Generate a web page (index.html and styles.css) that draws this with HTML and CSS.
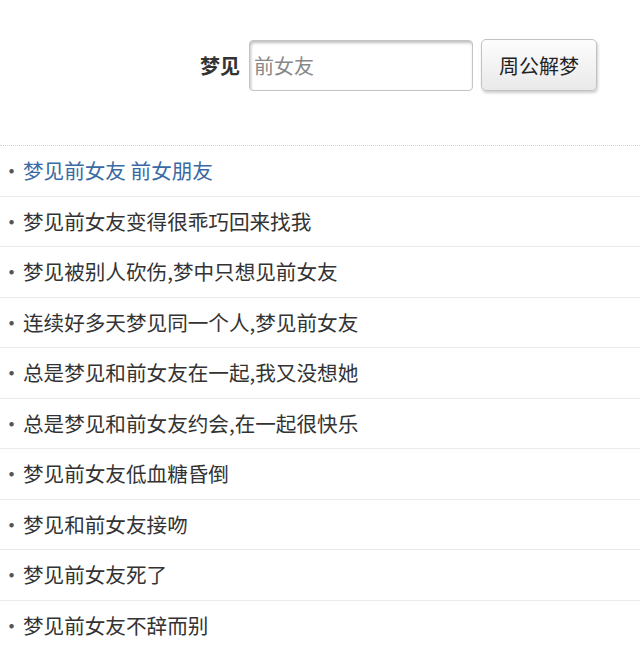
FILE: index.html
```html
<!DOCTYPE html>
<html lang="zh-CN">
<head>
<meta charset="UTF-8">
<title>周公解梦 - 梦见前女友</title>
<link rel="stylesheet" href="styles.css">
</head>
<body>

<!-- Search -->
<form class="search">
  <label class="search-label" for="q">梦见</label>
  <input id="q" class="search-input" type="text" placeholder="前女友">
  <button class="search-btn" type="button">周公解梦</button>
</form>

<!-- Results -->
<ul class="list">
  <li class="item current"><a href="#">梦见前女友 前女朋友</a></li>
  <li class="item"><a href="#">梦见前女友变得很乖巧回来找我</a></li>
  <li class="item"><a href="#">梦见被别人砍伤,梦中只想见前女友</a></li>
  <li class="item"><a href="#">连续好多天梦见同一个人,梦见前女友</a></li>
  <li class="item"><a href="#">总是梦见和前女友在一起,我又没想她</a></li>
  <li class="item"><a href="#">总是梦见和前女友约会,在一起很快乐</a></li>
  <li class="item"><a href="#">梦见前女友低血糖昏倒</a></li>
  <li class="item"><a href="#">梦见和前女友接吻</a></li>
  <li class="item"><a href="#">梦见前女友死了</a></li>
  <li class="item"><a href="#">梦见前女友不辞而别</a></li>
</ul>

</body>
</html>
```

FILE: styles.css
```css
body{margin:0;background:#fff;font-family:"Noto Sans CJK SC","Noto Sans",sans-serif;color:#333}
/* Search */
.search{display:flex;align-items:center;padding:39px 0 0 200px;height:52px;margin:0 0 54px}
.search-label{font-size:20px;font-weight:700;color:#333;margin-right:9px}
.search-input{box-sizing:border-box;width:224px;height:51px;padding:0 4px;border:1px solid #c4c4c4;border-radius:4px;box-shadow:inset 1px 2px 3px rgba(0,0,0,0.25);font-family:inherit;font-size:20px;color:#333;outline:none}
.search-input::placeholder{color:#888}
.search-btn{box-sizing:border-box;width:116px;height:52px;margin-left:8px;border:1px solid #c2c2c2;border-radius:5px;background:linear-gradient(#fdfdfd,#e9e9e9);box-shadow:1px 2px 3px rgba(0,0,0,0.2);font-family:inherit;font-size:20px;color:#222;cursor:pointer}
/* List */
.list{list-style:none;margin:0;padding:0;border-top:1px dotted #d4d4d4}
.item{height:49.56px;line-height:49.56px;border-bottom:1px solid #ebebeb;padding-left:0;font-size:20.6px}
.item:before{content:"·";display:inline-block;width:23px;text-align:center;color:#555}
.item a{color:#333;text-decoration:none}
.item.current a{color:#3a6aa3}
.item:last-child{border-bottom:none}
```
